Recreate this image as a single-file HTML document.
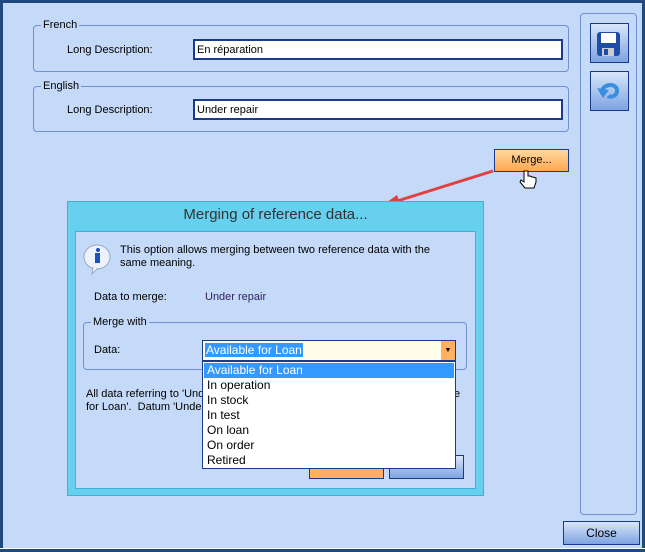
<!DOCTYPE html>
<html><head><style>
*{box-sizing:border-box;margin:0;padding:0}
body{width:645px;height:552px;background:#1f4a80;font-family:"Liberation Sans",sans-serif;font-size:11px;color:#000;position:relative;overflow:hidden}
.a{position:absolute}
.main{left:3px;top:3px;width:639px;height:545px;background:#c4daf8}
.grp{border:1px solid #7090d0;border-radius:4px}
.leg{background:#c4daf8;padding:0 2px;font-size:11px}
.inp{background:#fff;border:2px solid #1a3a8a;padding:3px 2px;font-size:11px}
.btnb{background:linear-gradient(#d8e6fb,#7ea3e0);border:1px solid #1a3a8a}
</style></head><body>
<div class="a main"></div>
<div class="a grp" style="left:33px;top:25px;width:536px;height:47px"></div>
<div class="a leg" style="left:41px;top:19px">French</div>
<div class="a" style="left:67px;top:44px">Long Description:</div>
<div class="a inp" style="left:193px;top:39px;width:370px;height:21px">En réparation</div>
<div class="a grp" style="left:33px;top:86px;width:536px;height:46px"></div>
<div class="a leg" style="left:41px;top:80px">English</div>
<div class="a" style="left:67px;top:104px">Long Description:</div>
<div class="a inp" style="left:193px;top:99px;width:370px;height:21px">Under repair</div>
<div class="a" style="left:494px;top:149px;width:75px;height:23px;background:linear-gradient(#ffd8a0,#ffa850);border:1px solid #1a3a8a;text-align:center;line-height:21px">Merge...</div>
<svg class="a" style="left:516px;top:168px" width="26" height="26" viewBox="0 0 26 26"><path d="M8 3v11l-3-2-1 2 5 6h9l2-6v-4l-3-1-1 0-2-1-2 0V3z" fill="#fff" stroke="#000"/></svg>
<svg class="a" style="left:380px;top:165px" width="120" height="45"><path d="M113 6L14 37" stroke="#e04040" stroke-width="3"/><path d="M3 40l14-10 3 8z" fill="#e04040"/></svg>
<div class="a grp" style="left:580px;top:13px;width:57px;height:502px"></div>
<div class="a btnb" style="left:590px;top:23px;width:39px;height:40px"></div>
<svg class="a" style="left:596px;top:31px" width="26" height="28"><rect x="1" y="1" width="23" height="24" rx="3" fill="#1e4da8"/><rect x="5" y="2" width="15" height="10" fill="#fff"/><rect x="6" y="17" width="12" height="8" fill="#ccc"/><rect x="8" y="18" width="4" height="6" fill="#1e4da8"/></svg>
<div class="a btnb" style="left:590px;top:71px;width:39px;height:40px"></div>
<svg class="a" style="left:596px;top:78px" width="26" height="26"><path d="M6 16 C4 6,20 4,21 12 C22 18,14 20,12 18" fill="none" stroke="#3a8ee0" stroke-width="4"/><path d="M1 10l6 10 6-8z" fill="#3a8ee0"/></svg>
<div class="a btnb" style="left:563px;top:521px;width:77px;height:24px;text-align:center;line-height:22px;font-size:12px">Close</div>
<div class="a" style="left:0;top:548px;width:645px;height:1px;background:#fff"></div>

<div class="a" style="left:67px;top:201px;width:417px;height:295px;background:#66d0ee;border:1px solid #40b0d8"></div>
<div class="a" style="left:67px;top:206px;width:417px;text-align:center;font-size:15px;color:#333">Merging of reference data...</div>
<div class="a" style="left:75px;top:231px;width:401px;height:258px;background:#c4daf8;border:1px solid #40b0d8"></div>
<svg class="a" style="left:83px;top:242px" width="32" height="34"><ellipse cx="14" cy="15" rx="13" ry="12" fill="#eef2ff" stroke="#9ab" /><path d="M10 25l-1 7 6-6" fill="#eef2ff" stroke="#9ab"/><circle cx="15" cy="8" r="2" fill="#1a50c0"/><rect x="12" y="11" width="5" height="10" fill="#1a50c0"/></svg>
<div class="a" style="left:120px;top:244px;line-height:13px">This option allows merging between two reference data with the<br>same meaning.</div>
<div class="a" style="left:94px;top:291px">Data to merge:</div>
<div class="a" style="left:205px;top:291px;color:#302060">Under repair</div>
<div class="a grp" style="left:83px;top:322px;width:384px;height:48px"></div>
<div class="a leg" style="left:91px;top:316px">Merge with</div>
<div class="a" style="left:94px;top:344px">Data:</div>
<div class="a" style="left:86px;top:388px;line-height:13px">All data referring to 'Und<br>for Loan'.&nbsp; Datum 'Under</div>
<div class="a" style="left:454px;top:388px">e</div>
<div class="a" style="left:309px;top:455px;width:75px;height:24px;background:#ffb060;border:1px solid #1a3a8a"></div>
<div class="a btnb" style="left:389px;top:455px;width:75px;height:24px"></div>
<div class="a" style="left:202px;top:340px;width:254px;height:21px;background:#fffde8;border:1px solid #1a3a8a"></div>
<div class="a" style="left:205px;top:343px;background:#3399ff;color:#fff;padding:0 1px;font-size:12px">Available for Loan</div>
<div class="a" style="left:441px;top:341px;width:14px;height:19px;background:#ffb060;text-align:center;font-size:7px;line-height:19px">▼</div>
<div class="a" style="left:202px;top:361px;width:254px;height:108px;background:#fff;border:1px solid #1a3a8a;line-height:15px;font-size:12px">
<div style="background:#3399ff;color:#fff;margin:1px 1px 0;padding-left:3px">Available for Loan</div>
<div style="padding-left:4px">In operation<br>In stock<br>In test<br>On loan<br>On order<br>Retired</div>
</div>
</body></html>
